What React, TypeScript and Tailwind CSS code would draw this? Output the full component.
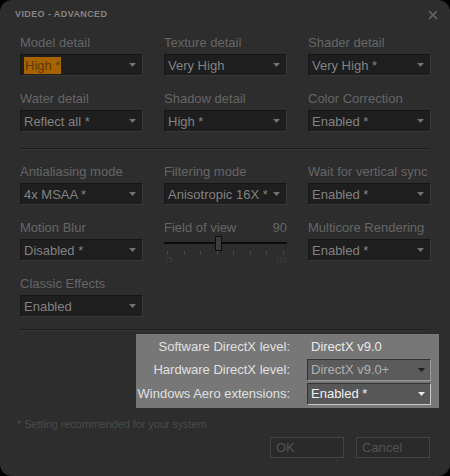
import React from 'react';

const font = { fontFamily: '"Liberation Sans", Arial, sans-serif' };

interface SelectProps {
  value: string;
  highlight?: boolean;
}

function Select({ value, highlight }: SelectProps) {
  return (
    <div className="mt-[3px] h-[22px] flex items-center justify-between pl-[3px] pr-[6px] bg-[#1e1e1e] border border-[#161616] border-b-[#383838] border-r-[#383838]">
      <span
        className={
          highlight
            ? 'text-[13px] leading-[17px] px-[1px] bg-[#a66300] text-[#5e3b0a]'
            : 'text-[13px] leading-[17px] text-[#828282]'
        }
      >
        {value}
      </span>
      <svg width="7" height="4" viewBox="0 0 7 4">
        <path d="M0 0 L7 0 L3.5 4 Z" fill="#707070" />
      </svg>
    </div>
  );
}

function Field({ label, value, highlight }: { label: string; value: string; highlight?: boolean }) {
  return (
    <div>
      <div className="h-4 text-[13px] leading-4 text-[#656565] whitespace-nowrap">{label}</div>
      <Select value={value} highlight={highlight} />
    </div>
  );
}

function Divider() {
  return <div className="h-[2px] border-t border-[#1c1c1c] border-b border-b-[#353535]" />;
}

function FovSlider() {
  return (
    <div className="h-[41px]">
      <div className="h-4 flex justify-between text-[13px] leading-4 text-[#656565]">
        <span>Field of view</span>
        <span>90</span>
      </div>
      <div className="relative h-[15px]">
        <div className="absolute left-0 right-0 top-[6px] h-[2px] bg-[#0c0c0c]" />
        <div className="absolute left-[51px] top-0 w-[7px] h-[15px] bg-[#3c3c3c] border border-[#0e0e0e]" />
      </div>
      <div className="flex justify-between px-[3px] h-[5px] items-start">
        {Array.from({ length: 8 }).map((_, i) => (
          <div key={i} className="w-px h-[4px] bg-[#474747]" />
        ))}
      </div>
      <div className="flex justify-between text-[7px] leading-[8px] text-[#404040]">
        <span className="pl-[1px]">75</span>
        <span>110</span>
      </div>
    </div>
  );
}

export default function App() {
  return (
    <div className="w-[450px] h-[476px] bg-black" style={font}>
      <div className="w-[450px] h-[476px] bg-[#2d2d2d] rounded-[12px] flex flex-col">
        <div className="h-[30px] flex items-center justify-between pl-[15px] pr-[12px]">
          <span className="text-[9px] font-bold tracking-[0.4px] text-[#858585]">VIDEO - ADVANCED</span>
          <svg width="10" height="10" viewBox="0 0 10 10">
            <path d="M1 1 L9 9 M9 1 L1 9" stroke="#666" strokeWidth="1.6" />
          </svg>
        </div>

        <div className="px-[20px] pt-[5px]">
          <div className="grid grid-cols-[123px_123px_123px] gap-x-[21px] gap-y-[15px]">
            <Field label="Model detail" value="High *" highlight />
            <Field label="Texture detail" value="Very High" />
            <Field label="Shader detail" value="Very High *" />
            <Field label="Water detail" value="Reflect all *" />
            <Field label="Shadow detail" value="High *" />
            <Field label="Color Correction" value="Enabled *" />
          </div>

          <div className="mt-[16px]">
            <Divider />
          </div>

          <div className="mt-[14px] grid grid-cols-[123px_123px_123px] gap-x-[21px] gap-y-[15px]">
            <Field label="Antialiasing mode" value="4x MSAA *" />
            <Field label="Filtering mode" value="Anisotropic 16X *" />
            <Field label="Wait for vertical sync" value="Enabled *" />
            <Field label="Motion Blur" value="Disabled *" />
            <FovSlider />
            <Field label="Multicore Rendering" value="Enabled *" />
            <Field label="Classic Effects" value="Enabled" />
          </div>

          <div className="mt-[12px]">
            <Divider />
          </div>

          <div className="mt-[3px] ml-[116px] -mr-[9px] h-[74px] bg-[#777777] pt-[2px] pr-[8px]">
            <div className="grid grid-cols-[154px_124px] gap-x-[17px] gap-y-[1px] text-[13px]">
              <div className="h-[22px] leading-[22px] text-right text-[#e0e0e0] whitespace-nowrap">Software DirectX level:</div>
              <div className="h-[22px] leading-[22px] pl-[4px] text-[#eaeaea]">DirectX v9.0</div>
              <div className="h-[22px] leading-[22px] text-right text-[#e0e0e0] whitespace-nowrap">Hardware DirectX level:</div>
              <div className="h-[22px] flex items-center justify-between pl-[3px] pr-[5px] bg-[#5b5b5b] border border-[#333] border-b-[#9a9a9a] border-r-[#9a9a9a]">
                <span className="text-[#b0b0b0]">DirectX v9.0+</span>
                <svg width="7" height="4" viewBox="0 0 7 4">
                  <path d="M0 0 L7 0 L3.5 4 Z" fill="#1e1e1e" />
                </svg>
              </div>
              <div className="h-[22px] leading-[22px] text-right text-[#e0e0e0] whitespace-nowrap mt-[1px]">Windows Aero extensions:</div>
              <div className="h-[22px] mt-[1px] flex items-center justify-between pl-[3px] pr-[5px] bg-[#575757] border border-[#333] border-b-[#c8c8c8] border-r-[#c8c8c8]">
                <span className="text-[#f0f0f0]">Enabled *</span>
                <svg width="7" height="4" viewBox="0 0 7 4">
                  <path d="M0 0 L7 0 L3.5 4 Z" fill="#e6e6e6" />
                </svg>
              </div>
            </div>
          </div>

          <div className="mt-[10px] -ml-[3px] h-3 text-[11px] leading-3 tracking-[-0.1px] text-[#4a4a4a]">
            * Setting recommended for your system
          </div>

          <div className="mt-[7px] flex justify-end gap-[12px]">
            <div className="w-[74px] h-[21px] border border-[#434343] bg-[#2a2a2a] text-[13px] leading-[19px] pl-[5px] text-[#525252]">OK</div>
            <div className="w-[74px] h-[21px] border border-[#434343] bg-[#2a2a2a] text-[13px] leading-[19px] pl-[5px] text-[#525252]">Cancel</div>
          </div>
        </div>
      </div>
    </div>
  );
}
